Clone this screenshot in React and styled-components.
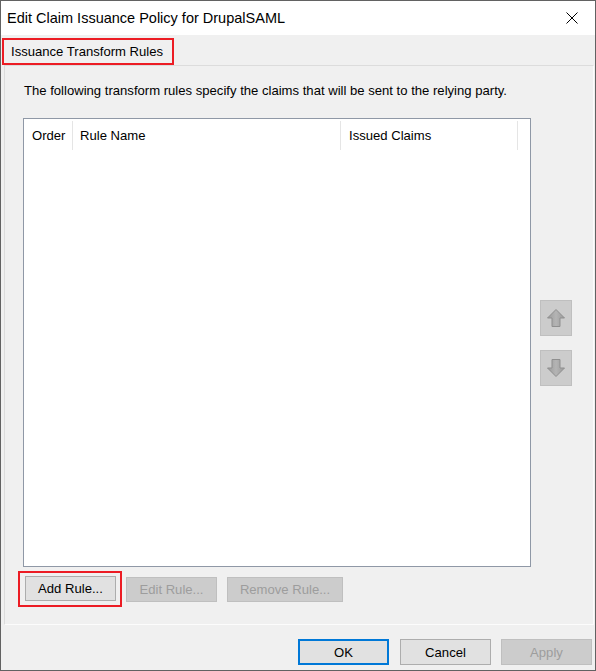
import React from "react";
import styled, { createGlobalStyle } from "styled-components";

const Global = createGlobalStyle`
  html, body { margin: 0; padding: 0; background: #f0f0f0; }
  * { box-sizing: border-box; }
`;

const FONT = `"Liberation Sans", Arial, sans-serif`;

const Window = styled.div`
  width: 596px;
  height: 671px;
  border: 1px solid #626262;
  background: #f0f0f0;
  display: flex;
  flex-direction: column;
  font-family: ${FONT};
  color: #000;
`;

const TitleBar = styled.div`
  height: 34px;
  background: #fff;
  display: flex;
  align-items: center;
  justify-content: space-between;
  padding: 0 0 0 6px;
  flex-shrink: 0;
`;

const Title = styled.div`
  font-size: 14.5px;
  margin-top: -1px;
`;

const CloseBtn = styled.div`
  width: 46px;
  height: 34px;
  display: flex;
  align-items: center;
  justify-content: center;
`;

const TabStrip = styled.div`
  height: 30px;
  display: flex;
  align-items: flex-end;
  padding-left: 1px;
  flex-shrink: 0;
`;

const Tab = styled.div`
  height: 27px;
  width: 172px;
  border: 2px solid #ec1c24;
  display: flex;
  align-items: center;
  padding-left: 7px;
  font-size: 13.1px;
  background: #f0f0f0;
`;

const Panel = styled.div`
  height: 560px;
  margin: 0 1px 0 3px;
  border: 1px solid #fcfcfc;
  border-top-color: #dcdcdc;
  border-left-color: #dcdcdc;
  display: flex;
  flex-direction: column;
  flex-shrink: 0;
`;

const Description = styled.div`
  margin: 17px 0 0 19px;
  font-size: 13.1px;
  line-height: 15px;
`;

const ContentRow = styled.div`
  display: flex;
  margin: 20px 0 0 18px;
  height: 449px;
`;

const ListView = styled.div`
  width: 508px;
  height: 100%;
  background: #fff;
  border: 1px solid #8f98a6;
`;

const HeaderRow = styled.div`
  display: flex;
  height: 33px;
  padding-top: 2px;
`;

const HeaderCell = styled.div`
  width: ${(p) => p.$w}px;
  border-right: 1px solid #e5e5e5;
  display: flex;
  align-items: center;
  padding-left: ${(p) => p.$pad}px;
  font-size: 13.1px;
  height: 29px;
`;

const ArrowCol = styled.div`
  display: flex;
  flex-direction: column;
  justify-content: center;
  gap: 14px;
  margin-left: 9px;
`;

const ArrowBtn = styled.div`
  width: 32px;
  height: 36px;
  background: #cccccc;
  border: 1px solid #bfbfbf;
  display: flex;
  align-items: center;
  justify-content: center;
`;

const ButtonRow = styled.div`
  display: flex;
  align-items: center;
  margin: 4px 0 0 13px;
  gap: 4px;
`;

const Highlight = styled.div`
  border: 2px solid #ec1c24;
  padding: 3px 4px 4px 5px;
  display: flex;
`;

const Button = styled.div`
  width: ${(p) => p.$w || 91}px;
  height: ${(p) => p.$h || 25}px;
  margin-left: ${(p) => p.$ml || 0}px;
  display: flex;
  align-items: center;
  justify-content: center;
  font-size: 13.1px;
  background: ${(p) => (p.$disabled ? "#cccccc" : "#e1e1e1")};
  color: ${(p) => (p.$disabled ? "#9d9d9d" : "#000")};
  border: ${(p) =>
    p.$default ? "2px solid #0078d7" : p.$disabled ? "1px solid #bfbfbf" : "1px solid #adadad"};
`;

const Footer = styled.div`
  flex: 1;
  display: flex;
  justify-content: flex-end;
  align-items: flex-start;
  padding: 14px 3px 0 0;
  gap: 10px;
`;

const UpArrow = () => (
  <svg width="20" height="20" viewBox="0 0 20 20">
    <defs>
      <linearGradient id="ga" x1="0" x2="1" y1="0" y2="0">
        <stop offset="0" stopColor="#9a9a9a" />
        <stop offset="0.5" stopColor="#b4b4b4" />
        <stop offset="1" stopColor="#9a9a9a" />
      </linearGradient>
    </defs>
    <path
      d="M10 1.5 L18.5 10 L14 10 L14 18.5 L6 18.5 L6 10 L1.5 10 Z"
      fill="url(#ga)"
      stroke="#8f8f8f"
      strokeWidth="1"
      strokeLinejoin="round"
    />
  </svg>
);

const DownArrow = () => (
  <svg width="20" height="20" viewBox="0 0 20 20">
    <defs>
      <linearGradient id="gb" x1="0" x2="1" y1="0" y2="0">
        <stop offset="0" stopColor="#9a9a9a" />
        <stop offset="0.5" stopColor="#b4b4b4" />
        <stop offset="1" stopColor="#9a9a9a" />
      </linearGradient>
    </defs>
    <path
      d="M10 18.5 L18.5 10 L14 10 L14 1.5 L6 1.5 L6 10 L1.5 10 Z"
      fill="url(#gb)"
      stroke="#8f8f8f"
      strokeWidth="1"
      strokeLinejoin="round"
    />
  </svg>
);

const CloseIcon = () => (
  <svg width="12" height="12" viewBox="0 0 12 12">
    <path d="M0.5 0.5 L11.5 11.5 M11.5 0.5 L0.5 11.5" stroke="#000" strokeWidth="1" />
  </svg>
);

export default function App() {
  return (
    <>
      <Global />
      <Window>
        <TitleBar>
          <Title>Edit Claim Issuance Policy for DrupalSAML</Title>
          <CloseBtn>
            <CloseIcon />
          </CloseBtn>
        </TitleBar>
        <TabStrip>
          <Tab>Issuance Transform Rules</Tab>
        </TabStrip>
        <Panel>
          <Description>
            The following transform rules specify the claims that will be sent to the relying party.
          </Description>
          <ContentRow>
            <ListView>
              <HeaderRow>
                <HeaderCell $w={49} $pad={8}>Order</HeaderCell>
                <HeaderCell $w={268} $pad={7}>Rule Name</HeaderCell>
                <HeaderCell $w={177} $pad={8}>Issued Claims</HeaderCell>
              </HeaderRow>
            </ListView>
            <ArrowCol>
              <ArrowBtn>
                <UpArrow />
              </ArrowBtn>
              <ArrowBtn>
                <DownArrow />
              </ArrowBtn>
            </ArrowCol>
          </ContentRow>
          <ButtonRow>
            <Highlight>
              <Button>Add Rule...</Button>
            </Highlight>
            <Button $disabled>Edit Rule...</Button>
            <Button $disabled $w={116} $ml={6}>Remove Rule...</Button>
          </ButtonRow>
        </Panel>
        <Footer>
          <Button $default $h={26}>OK</Button>
          <Button $h={26} $ml={1}>Cancel</Button>
          <Button $disabled $h={26}>Apply</Button>
        </Footer>
      </Window>
    </>
  );
}
